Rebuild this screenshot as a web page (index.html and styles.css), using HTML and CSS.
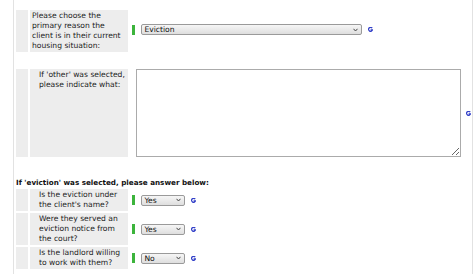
FILE: index.html
```html
<!DOCTYPE html>
<html lang="en">
  <head>
    <meta charset="UTF-8" />
    <title>Housing situation</title>
    <link rel="stylesheet" href="styles.css">
  </head>
  <body>
    <main class="panel">
      <table class="form-table">
        <tr>
          <td class="gutter"></td>
          <td class="label label--tight">Please choose the<br>primary reason the<br>client is in their current<br>housing situation:</td>
          <td class="field field--raise">
            <span class="bar"></span>
            <select class="pick pick--wide" title="reason">
              <option>Eviction</option>
            </select>
            <svg class="g-icon" width="5" height="5" viewBox="0 0 5 5"><path d="M4.2 1.2A2 2 0 1 0 4.5 2.8H2.6" fill="none" stroke="#3340c8" stroke-width="1.2"/></svg>
          </td>
        </tr>
        <tr class="spacer"><td colspan="3"></td></tr>
        <tr>
          <td class="gutter"></td>
          <td class="label">If 'other' was selected,<br>please indicate what:</td>
          <td class="field">
            <textarea class="notes" title="other"></textarea>
            <svg class="g-icon" width="5" height="5" viewBox="0 0 5 5"><path d="M4.2 1.2A2 2 0 1 0 4.5 2.8H2.6" fill="none" stroke="#3340c8" stroke-width="1.2"/></svg>
          </td>
        </tr>
      </table>

      <h2 class="section-title">If 'eviction' was selected, please answer below:</h2>

      <table class="form-table form-table--sub">
        <tr>
          <td class="gutter"></td>
          <td class="label">Is the eviction under<br>the client's name?</td>
          <td class="field">
            <span class="bar"></span>
            <select class="pick" title="name"><option>Yes</option><option>No</option></select>
            <svg class="g-icon" width="5" height="5" viewBox="0 0 5 5"><path d="M4.2 1.2A2 2 0 1 0 4.5 2.8H2.6" fill="none" stroke="#3340c8" stroke-width="1.2"/></svg>
          </td>
        </tr>
        <tr>
          <td class="gutter"></td>
          <td class="label">Were they served an<br>eviction notice from<br>the court?</td>
          <td class="field">
            <span class="bar"></span>
            <select class="pick" title="notice"><option>Yes</option><option>No</option></select>
            <svg class="g-icon" width="5" height="5" viewBox="0 0 5 5"><path d="M4.2 1.2A2 2 0 1 0 4.5 2.8H2.6" fill="none" stroke="#3340c8" stroke-width="1.2"/></svg>
          </td>
        </tr>
        <tr>
          <td class="gutter"></td>
          <td class="label">Is the landlord willing<br>to work with them?</td>
          <td class="field">
            <span class="bar"></span>
            <select class="pick" title="landlord"><option>No</option><option>Yes</option></select>
            <svg class="g-icon" width="5" height="5" viewBox="0 0 5 5"><path d="M4.2 1.2A2 2 0 1 0 4.5 2.8H2.6" fill="none" stroke="#3340c8" stroke-width="1.2"/></svg>
          </td>
        </tr>
      </table>
    </main>
  </body>
</html>
```

FILE: styles.css
```css
body {
  margin: 0;
  background: #fff;
  font-family: "DejaVu Sans", Verdana, sans-serif;
  font-size: 7.6px;
  color: #1c1c1c;
}
.panel {
  margin-left: 13px;
  width: 460px;
  height: 274px;
  border-left: 1px solid #e2e2e2;
  border-right: 1px solid #e2e2e2;
  padding-top: 8px;
  box-sizing: border-box;
}
.form-table {
  width: 100%;
  table-layout: fixed;
  border-spacing: 2px;
}
.gutter {
  width: 12px;
  padding: 0;
  background: #ededed;
}
.label {
  width: 98px;
  box-sizing: border-box;
  padding: 1px 0 1px 9px;
  line-height: 10px;
  white-space: nowrap;
  overflow: hidden;
  vertical-align: top;
  background: #ededed;
}
.label--tight {
  padding-left: 2px;
}
.spacer td {
  height: 13px;
  padding: 0;
}
.field {
  padding: 0 0 0 2px;
  white-space: nowrap;
}
.field--raise {
  padding-bottom: 3px;
}
.field > * {
  vertical-align: middle;
}
.bar {
  display: inline-block;
  width: 3px;
  height: 10px;
  margin-right: 4px;
  background: #3cb43c;
}
.pick {
  appearance: none;
  width: 44px;
  height: 11px;
  margin: 0;
  padding: 0 0 0 2px;
  border: 1px solid #9a9a9a;
  border-radius: 2px;
  font-family: "DejaVu Sans", Verdana, sans-serif;
  font-size: 7.6px;
  line-height: 9px;
  color: #111;
  background: url("data:image/svg+xml,%3Csvg xmlns='http://www.w3.org/2000/svg' width='5' height='4'%3E%3Cpath d='M0.5 0.8L2.5 3L4.5 0.8' fill='none' stroke='%23444' stroke-width='1'/%3E%3C/svg%3E") no-repeat right 3px center, linear-gradient(#f6f6f6, #dedede);
}
.pick--wide {
  width: 221px;
}
.g-icon {
  margin-left: 3px;
}
.notes {
  width: 325px;
  height: 88px;
  margin: 0 0 0 4px;
  padding: 0;
  box-sizing: border-box;
  border: 1px solid #ababab;
  resize: both;
}
.section-title {
  margin: 19px 0 0;
  padding-left: 2px;
  font-size: 7.2px;
  line-height: 9px;
  color: #111;
}
```
